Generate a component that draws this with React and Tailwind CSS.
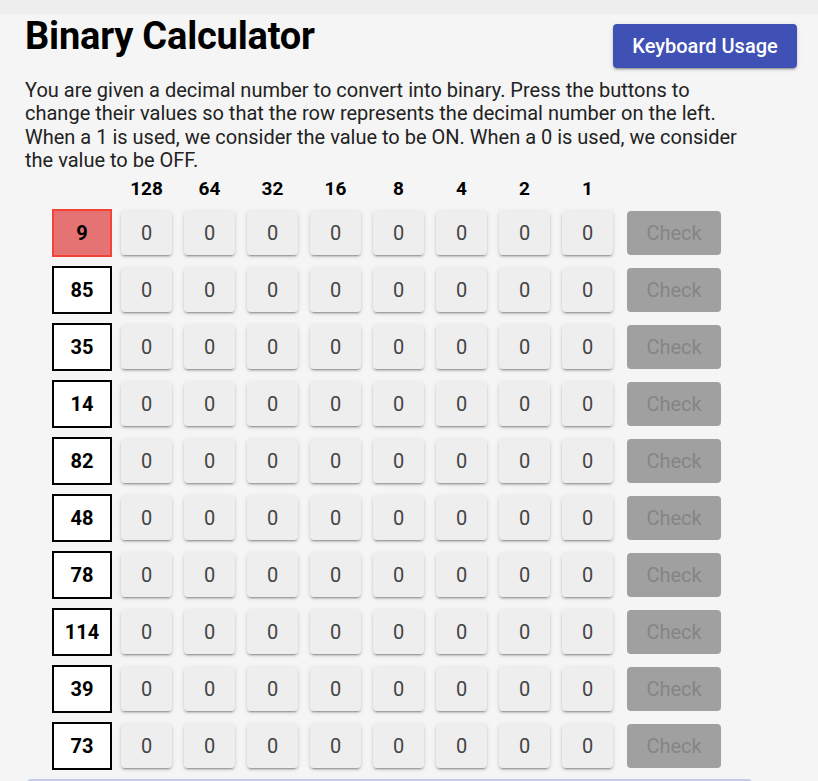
import React from "react";

const weights = [128, 64, 32, 16, 8, 4, 2, 1];
const numbers = [9, 85, 35, 14, 82, 48, 78, 114, 39, 73];

export default function App() {
  return (
    <div className="w-[818px] h-[781px] overflow-hidden bg-[#f5f5f5] font-['Roboto','Liberation_Sans',sans-serif] text-black">
      <div className="h-[14px] bg-[#eeeeee]" />
      <div className="pl-[25px]">
        <div className="flex items-start justify-between w-[772px]">
          <h1 className="mt-[2px] text-[38px] leading-[40px] font-bold tracking-[-0.2px]">Binary Calculator</h1>
          <button className="mt-[10px] h-[44px] w-[184px] rounded-[4px] bg-[#3f51b5] text-white text-[20px] font-medium leading-none shadow-[0px_3px_1px_-2px_rgba(0,0,0,0.2),0px_2px_2px_0px_rgba(0,0,0,0.14),0px_1px_5px_0px_rgba(0,0,0,0.12)]">
            Keyboard Usage
          </button>
        </div>
        <p className="mt-[11px] w-[727px] text-[20px] leading-[23.3px] text-[#222]">
          You are given a decimal number to convert into binary. Press the buttons to change their values so that the row represents the decimal number on the left. When a 1 is used, we consider the value to be ON. When a 0 is used, we consider the value to be OFF.
        </p>
        <div className="ml-[27px] mt-[5px] flex flex-col gap-[9px]">
          <div className="flex h-[23px] items-center">
            <div className="w-[69px]" />
            <div className="flex gap-[12px]">
              {weights.map((w) => (
                <div key={w} className="w-[51px] text-center text-[19px] font-bold leading-none">
                  {w}
                </div>
              ))}
            </div>
          </div>
          {numbers.map((n, i) => (
            <div key={n} className="flex h-[48px] items-center">
              <div
                className={
                  i === 0
                    ? "w-[60px] h-[48px] flex items-center justify-center border-2 border-[#f44336] bg-[#e57373] text-[20px] font-bold"
                    : "w-[60px] h-[48px] flex items-center justify-center border-2 border-black bg-white text-[20px] font-bold"
                }
              >
                {n}
              </div>
              <div className="ml-[9px] flex gap-[12px]">
                {weights.map((w) => (
                  <button
                    key={w}
                    className="w-[51px] h-[44px] rounded-[4px] bg-[#eeeeee] text-[20px] text-[#444] leading-none shadow-[0px_3px_1px_-2px_rgba(0,0,0,0.2),0px_2px_2px_0px_rgba(0,0,0,0.14),0px_1px_5px_0px_rgba(0,0,0,0.12)]"
                  >
                    0
                  </button>
                ))}
              </div>
              <button className="ml-[14px] w-[94px] h-[44px] rounded-[4px] bg-[#a0a0a0] text-[20px] text-[#858585] leading-none">
                Check
              </button>
            </div>
          ))}
        </div>
        <div className="mt-[9px] ml-[2px] w-[725px] h-[4px] rounded-t-[4px] bg-[#c5cae9]" />
      </div>
    </div>
  );
}
